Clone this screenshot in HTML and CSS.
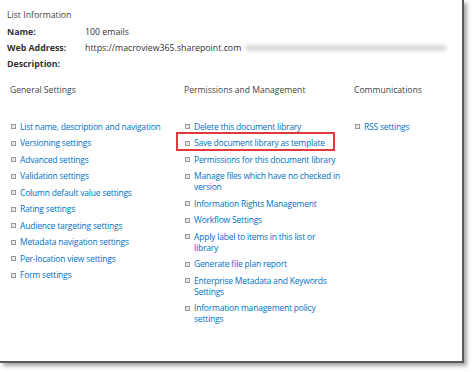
FILE: index.html
```html
<!DOCTYPE html>
<html>
<head>
<meta charset="utf-8">
<link rel="stylesheet" href="styles.css">
</head>
<body>
<div class="frame">
  <div class="info">
    <div class="info-title">List Information</div>
    <div class="info-grid">
      <div class="label">Name:</div><div class="value">100 emails</div>
      <div class="label">Web Address:</div><div class="value url">https://macroview365.sharepoint.com<span class="blur"></span></div>
      <div class="label">Description:</div><div class="value"></div>
    </div>
  </div>
  <div class="sections">
    <div class="col col1">
      <div class="col-title">General Settings</div>
      <ul class="links">
        <li><span class="bullet"></span><a>List name, description and navigation</a></li>
        <li><span class="bullet"></span><a>Versioning settings</a></li>
        <li><span class="bullet"></span><a>Advanced settings</a></li>
        <li><span class="bullet"></span><a>Validation settings</a></li>
        <li><span class="bullet"></span><a>Column default value settings</a></li>
        <li><span class="bullet"></span><a>Rating settings</a></li>
        <li><span class="bullet"></span><a>Audience targeting settings</a></li>
        <li><span class="bullet"></span><a>Metadata navigation settings</a></li>
        <li><span class="bullet"></span><a>Per-location view settings</a></li>
        <li><span class="bullet"></span><a>Form settings</a></li>
      </ul>
    </div>
    <div class="col col2">
      <div class="col-title">Permissions and Management</div>
      <ul class="links">
        <li><span class="bullet"></span><a>Delete this document library</a></li>
        <li class="highlight"><span class="bullet"></span><a>Save document library as template</a></li>
        <li><span class="bullet"></span><a>Permissions for this document library</a></li>
        <li><span class="bullet"></span><a>Manage files which have no checked in version</a></li>
        <li><span class="bullet"></span><a>Information Rights Management</a></li>
        <li><span class="bullet"></span><a>Workflow Settings</a></li>
        <li><span class="bullet"></span><a>Apply label to items in this list or<br>library</a></li>
        <li><span class="bullet"></span><a>Generate file plan report</a></li>
        <li><span class="bullet"></span><a>Enterprise Metadata and Keywords Settings</a></li>
        <li><span class="bullet"></span><a>Information management policy settings</a></li>
      </ul>
    </div>
    <div class="col col3">
      <div class="col-title">Communications</div>
      <ul class="links">
        <li><span class="bullet"></span><a>RSS settings</a></li>
      </ul>
    </div>
  </div>
</div>
</body>
</html>
```
FILE: styles.css
```css
html, body {
  margin: 0;
  padding: 0;
  background: #fff;
}
body {
  font-family: "Open Sans", "Noto Sans", sans-serif;
  font-size: 8.6px;
  color: #444;
  width: 474px;
  height: 372px;
  overflow: hidden;
}
.frame {
  box-sizing: border-box;
  width: 464px;
  height: 363px;
  border-right: 2px solid #5a5a5a;
  border-bottom: 2px solid #5a5a5a;
  box-shadow: 3px 3px 4px rgba(0,0,0,0.35);
  padding: 8px 0 0 7px;
  background: #fff;
}
.info-title {
  line-height: 14px;
  font-size: 8.7px;
  color: #444;
}
.info-grid {
  display: grid;
  grid-template-columns: 78px auto;
  grid-auto-rows: 16px;
  align-items: center;
  margin-top: 2px;
  font-size: 8.8px;
}
.label {
  font-weight: bold;
  color: #333;
}
.value {
  color: #333;
  display: flex;
  align-items: center;
}
.blur {
  display: inline-block;
  width: 200px;
  height: 6px;
  margin-left: 5px;
  background: #d6d6d6;
  filter: blur(2px);
}
.sections {
  display: grid;
  grid-template-columns: 174px 170px auto;
  margin-top: 11px;
  margin-left: 3px;
}
.col-title {
  line-height: 14px;
  font-size: 8.6px;
  color: #444;
}
.links {
  list-style: none;
  margin: 23.5px 0 0 0;
  padding: 0;
}
.links li {
  display: flex;
  align-items: flex-start;
  line-height: 11px;
  margin-bottom: 5.5px;
  position: relative;
  font-size: 8.5px;
  letter-spacing: -0.2px;
}
.col2 .links li { width: 159px; }
.bullet {
  flex: none;
  width: 3px;
  height: 3px;
  border: 1px solid #9a9a9a;
  background: #e8e8e8;
  margin: 3.5px 4px 0 1px;
}
.links a {
  color: #0072c6;
}
.highlight::after {
  content: "";
  position: absolute;
  left: -8px;
  top: -5px;
  width: 155px;
  height: 15px;
  border: 2px solid #e03a3e;
}
```
